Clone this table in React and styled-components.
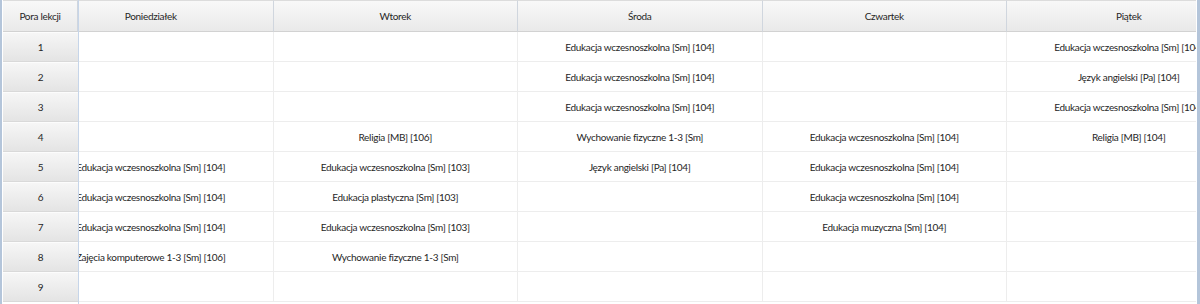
import React, { useLayoutEffect, useRef } from "react";
import styled, { createGlobalStyle } from "styled-components";

/* ================= DATA ================= */

const DAYS = ["Poniedziałek", "Wtorek", "Środa", "Czwartek", "Piątek"];

const EW = "Edukacja wczesnoszkolna [Sm] [104]";

const LESSONS = [
  ["", "", EW, "", EW],
  ["", "", EW, "", "Język angielski [Pa] [104]"],
  ["", "", EW, "", EW],
  ["", "Religia [MB] [106]", "Wychowanie fizyczne 1-3 [Sm]", EW, "Religia [MB] [104]"],
  [EW, "Edukacja wczesnoszkolna [Sm] [103]", "Język angielski [Pa] [104]", EW, ""],
  [EW, "Edukacja plastyczna [Sm] [103]", "", EW, ""],
  [EW, "Edukacja wczesnoszkolna [Sm] [103]", "", "Edukacja muzyczna [Sm] [104]", ""],
  ["Zajęcia komputerowe 1-3 [Sm] [106]", "Wychowanie fizyczne 1-3 [Sm]", "", "", ""],
  ["", "", "", "", ""],
];

const SCROLL_LEFT = 50;

/* ================= STYLES ================= */

const GlobalStyle = createGlobalStyle`
  html, body {
    margin: 0;
    padding: 0;
    background: #ffffff;
  }
  body {
    font-family: Lato, "Liberation Sans", sans-serif;
    font-size: 10px;
    letter-spacing: -0.3px;
    color: #262626;
  }
`;

const Grid = styled.div`
  width: 1200px;
  height: 304px;
  box-sizing: border-box;
  display: flex;
  overflow: hidden;
  background: #fff;
  border-left: 2px solid #b4c5da;
  border-right: 3px solid #b4c5da;
  padding: 0 1px;
`;

const Frozen = styled.div`
  width: 75px;
  flex: none;
  display: flex;
  flex-direction: column;
  border-right: 1px solid #c6d5e9;
`;

const Viewport = styled.div`
  flex: 1;
  overflow: hidden;
`;

const Table = styled.div`
  display: grid;
  grid-template-columns: repeat(5, 244.5px);
  grid-auto-rows: 30px;
  grid-template-rows: 32px;
  width: max-content;
`;

const HeadCell = styled.div`
  height: 32px;
  box-sizing: border-box;
  display: flex;
  align-items: center;
  justify-content: center;
  white-space: nowrap;
  background: linear-gradient(#f8f8f8, #e9e9e9);
  border-top: 1px solid #dcdcdc;
  border-bottom: 1px solid #d2d2d2;
  border-right: 1px solid ${({ $last }) => ($last ? "transparent" : "#d0d6de")};
`;

const RowNum = styled.div`
  height: 30px;
  box-sizing: border-box;
  display: flex;
  align-items: center;
  justify-content: center;
  background: linear-gradient(#f6f6f6, #e4e4e4);
  border-top: 1px solid #fcfcfc;
  border-bottom: 1px solid #d9d9d9;
`;

const Cell = styled.div`
  box-sizing: border-box;
  display: flex;
  align-items: center;
  justify-content: center;
  white-space: nowrap;
  overflow: hidden;
  border-bottom: 1px solid #ededed;
  border-right: 1px solid #ededed;
`;

/* ================= COMPONENT ================= */

const App = () => {
  const viewRef = useRef(null);

  useLayoutEffect(() => {
    if (viewRef.current) viewRef.current.scrollLeft = SCROLL_LEFT;
  }, []);

  return (
    <>
      <GlobalStyle />
      <Grid>
        <Frozen>
          <HeadCell>Pora lekcji</HeadCell>
          {LESSONS.map((_, i) => (
            <RowNum key={i}>{i + 1}</RowNum>
          ))}
        </Frozen>

        <Viewport ref={viewRef}>
          <Table>
            {DAYS.map((day, i) => (
              <HeadCell key={day} $last={i === DAYS.length - 1}>
                {day}
              </HeadCell>
            ))}
            {LESSONS.map((row, r) =>
              row.map((lesson, c) => <Cell key={`${r}-${c}`}>{lesson}</Cell>)
            )}
          </Table>
        </Viewport>
      </Grid>
    </>
  );
};

export default App;
